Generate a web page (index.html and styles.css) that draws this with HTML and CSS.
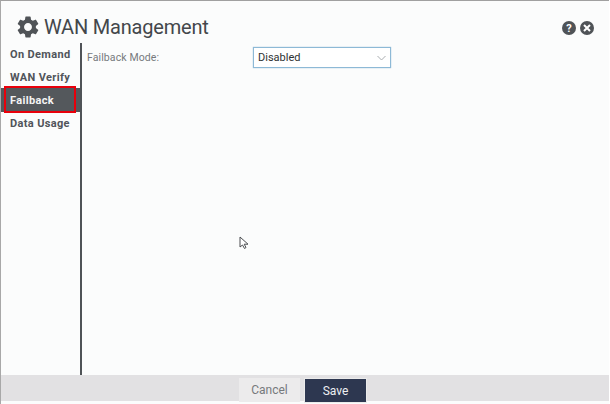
FILE: index.html
```html
<!DOCTYPE html>
<html lang="en">
<head>
    <meta charset="UTF-8">
    <title>WAN Management</title>
    <link rel="stylesheet" href="styles.css">
</head>
<body>
    <div class="dialog">
        <div class="header">
            <div class="title">
                <svg class="gear" width="22" height="22" viewBox="2.500 2 19 20">
                    <path fill="#4f5357" d="M19.140 12.940c.04-.3.06-.61.06-.94 0-.32-.02-.64-.07-.94l2.030-1.580a.49.49 0 0 0 .12-.61l-1.920-3.320a.488.488 0 0 0-.59-.22l-2.390.96c-.5-.38-1.030-.7-1.620-.94l-.36-2.540a.484.484 0 0 0-.48-.41h-3.840c-.24 0-.43.17-.47.41l-.36 2.540c-.59.24-1.130.57-1.620.94l-2.390-.96c-.22-.08-.47 0-.59.22L2.740 8.870c-.12.21-.08.47.12.61l2.030 1.580c-.05.3-.09.63-.09.94s.02.64.07.94l-2.030 1.580a.49.49 0 0 0-.12.61l1.920 3.320c.12.22.37.29.59.22l2.390-.96c.5.38 1.030.7 1.620.94l.36 2.540c.05.24.24.41.48.41h3.840c.24 0 .44-.17.47-.41l.36-2.540c.59-.24 1.130-.56 1.620-.94l2.390.96c.22.08.47 0 .59-.22l1.920-3.320c.12-.22.07-.47-.12-.61l-2.010-1.580zM12 15.600c-1.980 0-3.600-1.620-3.600-3.600s1.620-3.600 3.600-3.600 3.600 1.620 3.600 3.600-1.620 3.600-3.600 3.600z"/>
                </svg>
                <h1>WAN Management</h1>
            </div>
            <div class="header-icons">
                <span class="round-icon">?</span>
                <span class="round-icon">
                    <svg width="8" height="8" viewBox="0 0 8 8"><path d="M1 1l6 6M7 1L1 7" stroke="#fff" stroke-width="2"/></svg>
                </span>
            </div>
        </div>
        <div class="main">
            <ul class="side-menu">
                <li>On Demand</li>
                <li>WAN Verify</li>
                <li class="active">Failback</li>
                <li>Data Usage</li>
            </ul>
            <div class="content">
                <div class="form-row">
                    <label>Failback Mode:</label>
                    <div class="select-box">
                        <span>Disabled</span>
                        <svg width="9" height="6" viewBox="0 0 9 6"><path d="M.5 1l4 4 4-4" fill="none" stroke="#a9adb0"/></svg>
                    </div>
                </div>
                <svg class="cursor" width="10" height="14" viewBox="0 0 10 14">
                    <path d="M1 1v10l2.500-2 2 3.500 1.500-1-1.800-3.300H9z" fill="#fff" stroke="#4a4d50"/>
                </svg>
            </div>
        </div>
        <div class="footer">
            <button class="btn cancel">Cancel</button>
            <button class="btn save">Save</button>
        </div>
    </div>
</body>
</html>
```

FILE: styles.css
```css
html, body {
    margin: 0;
    height: 100%;
    overflow: hidden;
    background: #fff;
}
body {
    font-family: Roboto, "Liberation Sans", Arial, sans-serif;
}
.dialog {
    width: 609px;
    height: 404px;
    box-sizing: border-box;
    display: flex;
    flex-direction: column;
    background: #fbfcfc;
    border-top: 1px solid #a0a0a0;
    border-left: 1px solid #a8a8a8;
}
.header {
    height: 42px;
    flex: none;
    display: flex;
    justify-content: space-between;
    align-items: center;
    padding: 10px 15px 0 16px;
    box-sizing: border-box;
}
.title {
    display: flex;
    align-items: center;
    gap: 5px;
}
.gear {
    display: block;
}
h1 {
    margin: 0;
    font-size: 20px;
    font-weight: normal;
    color: #43474b;
    letter-spacing: -0.2px;
}
.header-icons {
    display: flex;
    gap: 4px;
    margin-top: 2px;
}
.round-icon {
    width: 14px;
    height: 14px;
    border-radius: 50%;
    background: #4f5357;
    color: #fff;
    font-size: 11px;
    font-weight: bold;
    display: flex;
    align-items: center;
    justify-content: center;
}
.main {
    flex: 1;
    display: flex;
    min-height: 0;
}
.side-menu {
    width: 81px;
    flex: none;
    box-sizing: border-box;
    margin: 0;
    padding: 0;
    list-style: none;
    border-right: 2px solid #4f5357;
}
.side-menu li {
    height: 23px;
    padding-left: 9px;
    line-height: 23px;
    font-size: 11px;
    font-weight: bold;
    letter-spacing: 0.35px;
    color: #50545a;
}
.side-menu li.active {
    position: relative;
    margin-top: -1px;
    height: 24px;
    line-height: 26px;
    background: #54585c;
    color: #f4f4f4;
}
.side-menu li.active::after {
    content: "";
    position: absolute;
    left: 3px;
    top: -2px;
    width: 72px;
    height: 27px;
    box-sizing: border-box;
    border: 2px solid #e8000b;
}
.content {
    flex: 1;
    position: relative;
    padding: 4px 0 0 5px;
}
.form-row {
    display: flex;
    align-items: center;
}
label {
    width: 166px;
    font-size: 10.5px;
    letter-spacing: 0.1px;
    color: #76797c;
}
.select-box {
    width: 138px;
    height: 21px;
    box-sizing: border-box;
    display: flex;
    align-items: center;
    justify-content: space-between;
    padding: 0 4px 0 4px;
    background: #fff;
    border: 1px solid #8db9d6;
    box-shadow: 0 0 1px #8db9d6;
    font-size: 11px;
    color: #2e3133;
}
.cursor {
    position: absolute;
    left: 157px;
    top: 193px;
}
.footer {
    height: 26px;
    flex: none;
    margin-bottom: 3px;
    display: flex;
    justify-content: center;
    align-items: flex-end;
    gap: 5px;
    padding-right: 5px;
    background: #e2e1e3;
}
.btn {
    width: 61px;
    height: 23px;
    margin-bottom: -1px;
    padding: 0;
    border: none;
    font-family: inherit;
    font-size: 12px;
}
.cancel {
    height: 24px;
    background: #ecebec;
    color: #76797c;
}
.save {
    background: #2d3750;
    color: #eef0f3;
    box-shadow: 0 0 0 1px #ebebeb;
}
```
